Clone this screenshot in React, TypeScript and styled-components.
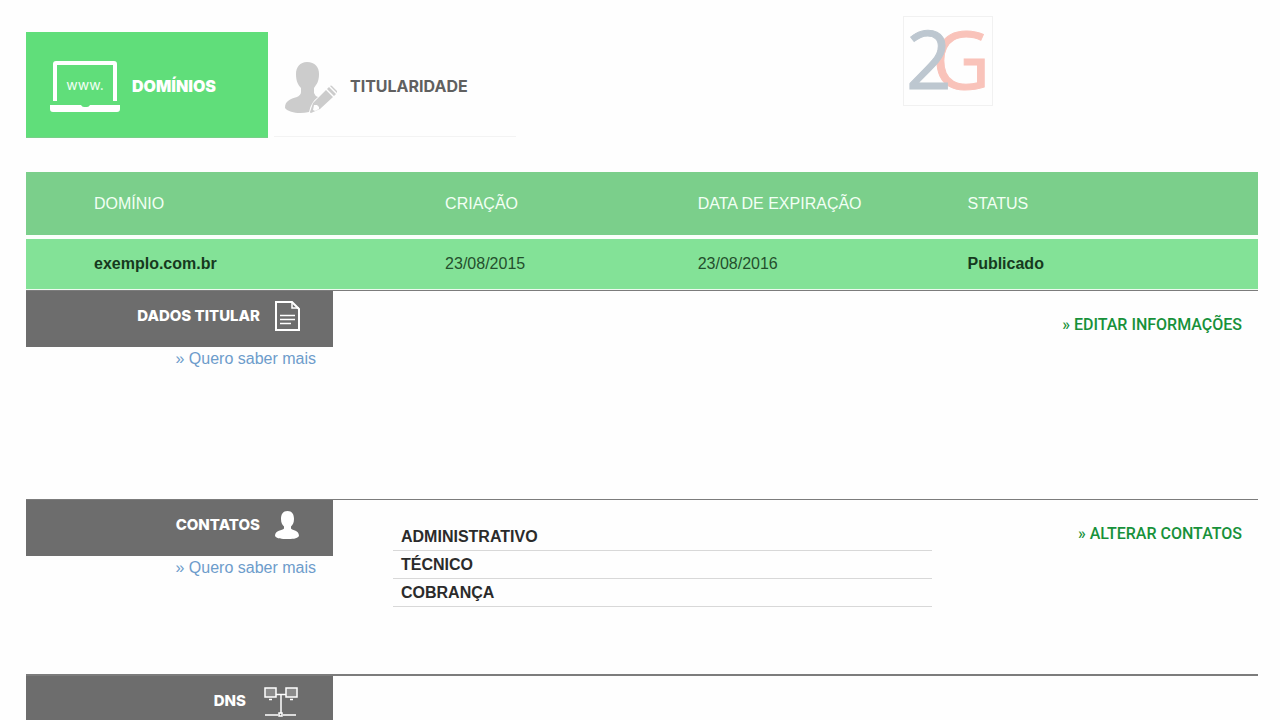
import React from "react";
import styled, { createGlobalStyle } from "styled-components";

const GlobalStyle = createGlobalStyle`
  * { box-sizing: border-box; }
  body {
    margin: 0;
    background: #fefefe;
    color: #2b2b2b;
    font: 16px/20px "Liberation Sans", Arial, sans-serif;
  }
  a { text-decoration: none; }
`;

const Page = styled.div`
  height: 100vh;
  overflow: hidden;
  padding: 16px 22px 0 26px;
`;

const Header = styled.header`
  display: grid;
  grid-template-columns: 877fr 355fr;
  height: 156px;
`;

const Tabs = styled.nav`
  display: flex;
  gap: 6px;
  padding-top: 16px;
`;

const Tab = styled.button<{ $active?: boolean }>`
  display: flex;
  align-items: center;
  gap: ${(p) => (p.$active ? 12 : 13)}px;
  width: 242px;
  height: ${(p) => (p.$active ? 106 : 105)}px;
  padding: ${(p) => (p.$active ? "2px 0 0 24px" : "4px 0 0 11px")};
  border: 0;
  border-bottom: 1px solid ${(p) => (p.$active ? "#78cf89" : "#f3f3f3")};
  background: ${(p) => (p.$active ? "#60de7a" : "transparent")};
  color: ${(p) => (p.$active ? "#ffffff" : "#606060")};
  font: ${(p) => (p.$active ? 900 : 700)} 16px/20px Inter, sans-serif;
  cursor: pointer;
`;

const Logo = styled.a`
  display: block;
  width: 90px;
  height: 90px;
  border: 1px solid #f1f1f1;
`;

const DomainTable = styled.table`
  width: 100%;
  table-layout: fixed;
  border-spacing: 0;
  text-align: left;
  border-bottom: 1px solid #eefaf0;

  col:nth-child(1) { width: 28.5%; }
  col:nth-child(2) { width: 20.5%; }
  col:nth-child(3) { width: 21.9%; }
`;

const HeadCell = styled.th`
  height: 67px;
  padding: 0 0 0 68px;
  border-bottom: 4px solid #fbfffb;
  background: #7bcf8b;
  color: #f2fff4;
  font-weight: 400;
`;

const Cell = styled.td<{ $strong?: boolean }>`
  height: 50px;
  padding: 0 0 0 68px;
  background: #83e297;
  color: ${(p) => (p.$strong ? "#16391e" : "#234f2d")};
  font-weight: ${(p) => (p.$strong ? 700 : 400)};
`;

const Section = styled.section<{ $height: number; $rule?: number }>`
  display: grid;
  grid-template-columns: 307fr 60fr 539fr 326fr;
  min-height: ${(p) => p.$height}px;
  border-top: ${(p) => p.$rule ?? 1}px solid #7c7c7c;
`;

const Side = styled.div`
  grid-column: 1;
  text-align: right;
`;

const SideTitle = styled.h2<{ $iconWidth?: number }>`
  display: flex;
  align-items: center;
  justify-content: flex-end;
  gap: ${(p) => (p.$iconWidth ? 18 : 15)}px;
  height: 56px;
  margin: 0 0 2px;
  padding: 0 ${(p) => (p.$iconWidth ? 35 : 33)}px 6px 0;
  background: #6d6d6d;
  color: #ffffff;
  font: 800 15px/20px Inter, sans-serif;
`;

const MoreLink = styled.a`
  padding-right: 17px;
  color: #6d9ccb;
`;

const Contacts = styled.ul`
  grid-column: 3;
  margin: 0;
  padding: 23px 0 0;
  list-style: none;
`;

const Contact = styled.li`
  height: 28px;
  padding: 4px 8px;
  border-bottom: 1px solid #d8d8d8;
  font-weight: 700;
`;

const ActionLink = styled.a`
  grid-column: 4;
  justify-self: end;
  padding: 24px 16px 0 0;
  color: #17913a;
  font: 500 16px/20px Roboto, sans-serif;
`;

const LaptopIcon = () => (
  <svg width="70" height="52" viewBox="0 0 70 52" aria-hidden="true">
    <path d="M5 41V4q0-1 1-1h58q1 0 1 1v37" fill="none" stroke="#fff" strokeWidth="4" />
    <path d="M0 45h31q1 2 3 2h3q2 0 3-2h30v4q0 3-3 3H3q-3 0-3-3z" fill="#fff" />
    <text x="35" y="30" textAnchor="middle" fontFamily="Inter, sans-serif" fontSize="14" fontWeight="400" fill="#f2fff4">www.</text>
  </svg>
);

const OwnerIcon = () => (
  <svg width="52" height="56" viewBox="0 -4 52 56" aria-hidden="true">
    <path
      d="M22 0c8 0 12 5 12 12 0 7-2 10-5 14v5q1 3 4 4-7 5-9 15C15 52 4 51 0 46c0-7 5-9 12-11q4-2 4-5v-4c-3-3-5-7-5-14C11 5 15 0 22 0z"
      fill="#cccccc"
    />
    <path
      d="M28 41L41 28l7 7-13 12-9 4q-1 0-1-1zM29 43l-1 5 2 1 4-2 0-2-2-2z"
      fill="#cccccc"
      fillRule="evenodd"
    />
    <path d="M42 27l2-2 7 7-2 2zM45 24q1-1 2 0l5 5q1 1 0 2z" fill="#cccccc" />
  </svg>
);

const DocumentIcon = () => (
  <svg width="25" height="30" viewBox="0 0 25 30" fill="none" stroke="#fff" aria-hidden="true">
    <path d="M1 1H17L24 8V29H1Z" strokeWidth="2" />
    <path d="M17 1V7H24M5 14.500H20M5 18.500H20M5 22.500H16" strokeWidth="1.500" />
  </svg>
);

const PersonIcon = () => (
  <svg width="25" height="28" viewBox="0 0 25 28" aria-hidden="true">
    <path
      d="M12.500 0C17 0 19 3 19 8C19 12 17.500 14 16 15.500V17.500C17.500 19.500 24 19 24 25C22 28 17 28 12 28C7 28 2 28 0 25C0 19 7.500 19.500 9 17.500V15.500C7.500 14 6 12 6 8C6 3 8 0 12.500 0Z"
      fill="#fff"
    />
  </svg>
);

const NetworkIcon = () => (
  <svg width="34" height="32" viewBox="0 0 34 32" fill="none" stroke="#fff" aria-hidden="true">
    <path d="M1 3h11v9H1zM22 3h11v9H22z" fill="#8b8b8b" strokeWidth="1.500" />
    <path d="M12 9.500h10M17 9v19M1 30h13M19 30h13M5 14.500h3M26 14.500h3" strokeWidth="1.500" />
    <path d="M15 28h3v3h-3z" strokeWidth="1.500" />
  </svg>
);

const Brand = () => (
  <svg width="88" height="88" viewBox="0 0 88 88" overflow="visible" role="img" aria-label="2G">
    <g fontFamily="Open Sans, sans-serif" fontSize="80" strokeWidth="1">
      <text x="28" y="72" fontWeight="500" fill="#f9c3ba" stroke="#f9c3ba">G</text>
      <text x="2" y="72" fontWeight="500" fill="#bdc7d0" stroke="#bdc7d0">2</text>
    </g>
  </svg>
);

const contacts = ["ADMINISTRATIVO", "TÉCNICO", "COBRANÇA"];

export default function App() {
  return (
    <Page>
      <GlobalStyle />
      <Header>
        <Tabs>
          <Tab $active type="button"><LaptopIcon />DOMÍNIOS</Tab>
          <Tab type="button"><OwnerIcon />TITULARIDADE</Tab>
        </Tabs>
        <Logo href="#"><Brand /></Logo>
      </Header>
      <main>
        <DomainTable>
          <colgroup><col /><col /><col /><col /></colgroup>
          <thead>
            <tr>
              <HeadCell>DOMÍNIO</HeadCell>
              <HeadCell>CRIAÇÃO</HeadCell>
              <HeadCell>DATA DE EXPIRAÇÃO</HeadCell>
              <HeadCell>STATUS</HeadCell>
            </tr>
          </thead>
          <tbody>
            <tr>
              <Cell $strong>exemplo.com.br</Cell>
              <Cell>23/08/2015</Cell>
              <Cell>23/08/2016</Cell>
              <Cell $strong>Publicado</Cell>
            </tr>
          </tbody>
        </DomainTable>
        <Section $height={209}>
          <Side>
            <SideTitle>DADOS TITULAR<DocumentIcon /></SideTitle>
            <MoreLink href="#titular">» Quero saber mais</MoreLink>
          </Side>
          <ActionLink href="#editar">» EDITAR INFORMAÇÕES</ActionLink>
        </Section>
        <Section $height={175}>
          <Side>
            <SideTitle>CONTATOS<PersonIcon /></SideTitle>
            <MoreLink href="#contatos">» Quero saber mais</MoreLink>
          </Side>
          <Contacts>
            {contacts.map((name) => <Contact key={name}>{name}</Contact>)}
          </Contacts>
          <ActionLink href="#alterar">» ALTERAR CONTATOS</ActionLink>
        </Section>
        <Section $height={58} $rule={2}>
          <Side>
            <SideTitle $iconWidth={34}>DNS<NetworkIcon /></SideTitle>
          </Side>
        </Section>
      </main>
    </Page>
  );
}
